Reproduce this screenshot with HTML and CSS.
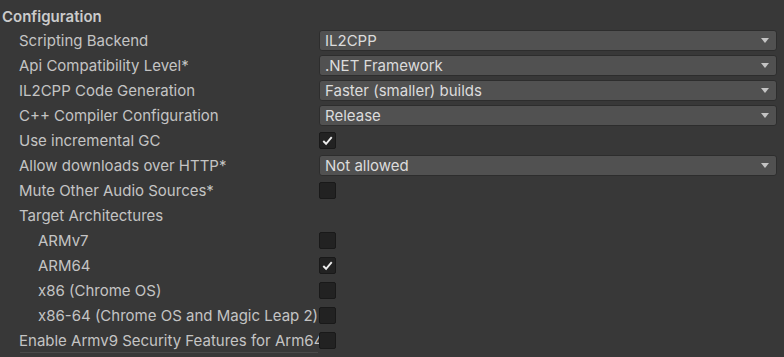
FILE: index.html
```html
<!DOCTYPE html>
<html lang="en">
<head>
    <meta charset="UTF-8">
    <title>Player Settings - Configuration</title>
    <link rel="stylesheet" href="styles.css">
</head>
<body>
    <div class="panel">
        <div class="section-title">Configuration</div>
        <div class="rows">
            <div class="row">
                <div class="label">Scripting Backend</div>
                <div class="popup"><span>IL2CPP</span><i class="arrow"></i></div>
            </div>
            <div class="row">
                <div class="label">Api Compatibility Level*</div>
                <div class="popup"><span>.NET Framework</span><i class="arrow"></i></div>
            </div>
            <div class="row">
                <div class="label">IL2CPP Code Generation</div>
                <div class="popup"><span>Faster (smaller) builds</span><i class="arrow"></i></div>
            </div>
            <div class="row">
                <div class="label">C++ Compiler Configuration</div>
                <div class="popup"><span>Release</span><i class="arrow"></i></div>
            </div>
            <div class="row">
                <div class="label">Use incremental GC</div>
                <div class="toggle checked"><svg viewBox="0 0 16 16"><polyline points="3.5,8.5 6.5,11.5 12.5,4.5"/></svg></div>
            </div>
            <div class="row">
                <div class="label">Allow downloads over HTTP*</div>
                <div class="popup"><span>Not allowed</span><i class="arrow"></i></div>
            </div>
            <div class="row">
                <div class="label">Mute Other Audio Sources*</div>
                <div class="toggle"></div>
            </div>
            <div class="row">
                <div class="label">Target Architectures</div>
                <div></div>
            </div>
            <div class="row">
                <div class="label nested">ARMv7</div>
                <div class="toggle"></div>
            </div>
            <div class="row">
                <div class="label nested">ARM64</div>
                <div class="toggle checked"><svg viewBox="0 0 16 16"><polyline points="3.5,8.5 6.5,11.5 12.5,4.5"/></svg></div>
            </div>
            <div class="row">
                <div class="label nested">x86 (Chrome OS)</div>
                <div class="toggle"></div>
            </div>
            <div class="row">
                <div class="label nested">x86-64 (Chrome OS and Magic Leap 2)</div>
                <div class="toggle"></div>
            </div>
            <div class="row last">
                <div class="label">Enable Armv9 Security Features for Arm64</div>
                <div class="toggle"></div>
            </div>
        </div>
    </div>
</body>
</html>
```

FILE: styles.css
```css
body {
    margin: 0;
    padding: 0;
    background-color: #383838;
    font-family: 'Inter', 'Liberation Sans', sans-serif;
    font-size: 15px;
    color: #c4c4c4;
}

.panel {
    padding: 6px 7px 0 0;
}

.section-title {
    height: 22px;
    line-height: 22px;
    padding-left: 2px;
    font-weight: 600;
    color: #cbcbcb;
}

.row {
    display: grid;
    grid-template-columns: 319px 1fr;
    align-items: center;
    height: 25px;
}

.label {
    padding-left: 19px;
    white-space: nowrap;
    overflow: hidden;
}

.label.nested {
    padding-left: 38px;
}

.row.last {
    position: relative;
}

.row.last::after {
    content: '';
    position: absolute;
    left: 20px;
    width: 298px;
    bottom: 0;
    height: 1px;
    background: #4a4a4a;
}

.popup {
    height: 19px;
    display: flex;
    align-items: center;
    justify-content: space-between;
    padding: 0 7px 0 5px;
    background-color: #515151;
    border: 1px solid #2d2d2d;
    border-radius: 3px;
    color: #dcdcdc;
}

.arrow {
    width: 0;
    height: 0;
    border-left: 4px solid transparent;
    border-right: 4px solid transparent;
    border-top: 5px solid #c4c4c4;
}

.toggle {
    width: 15px;
    height: 15px;
    background-color: #222222;
    border: 1px solid #191919;
    border-radius: 2px;
}

.toggle svg {
    width: 15px;
    height: 15px;
    display: block;
}

.toggle polyline {
    fill: none;
    stroke: #eeeeee;
    stroke-width: 2;
}
```
